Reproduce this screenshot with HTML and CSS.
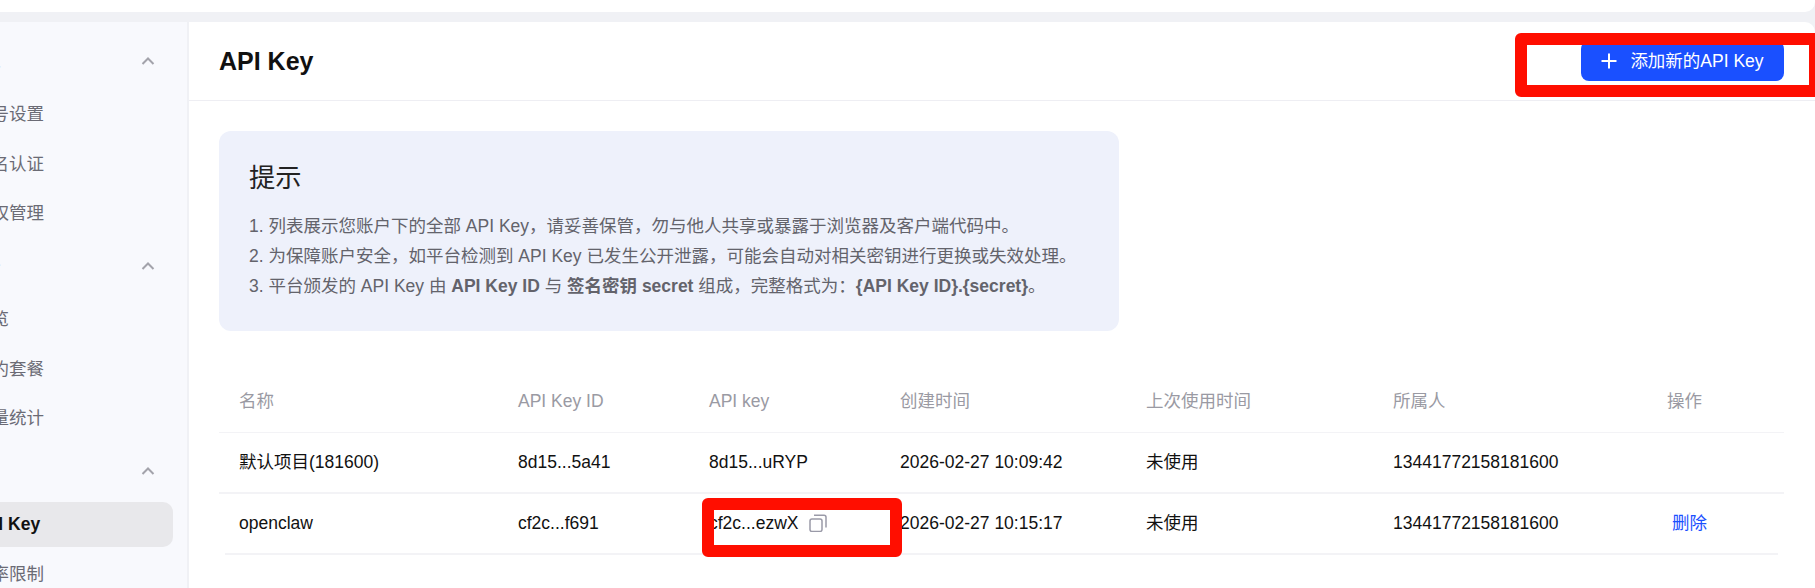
FILE: index.html
```html
<!DOCTYPE html>
<html lang="zh-CN">
<head>
    <meta charset="UTF-8">
    <title>API Key</title>
    <link rel="stylesheet" href="styles.css">
</head>
<body>
    <div class="topbar"></div>
    <div class="layout">
        <aside class="sidebar">
            <div class="menu">
                <div class="group"><span class="group-name">个人</span>
                    <svg class="chevron" viewBox="0 0 14 8"><path d="M1.5 7L7 1.5L12.5 7"/></svg>
                </div>
                <a class="item">账号设置</a>
                <a class="item">实名认证</a>
                <a class="item">授权管理</a>
                <div class="group"><span class="group-name">财务</span>
                    <svg class="chevron" viewBox="0 0 14 8"><path d="M1.5 7L7 1.5L12.5 7"/></svg>
                </div>
                <a class="item">总览</a>
                <a class="item">合约套餐</a>
                <a class="item">用量统计</a>
                <div class="group"><span class="group-name">项目</span>
                    <svg class="chevron" viewBox="0 0 14 8"><path d="M1.5 7L7 1.5L12.5 7"/></svg>
                </div>
                <a class="item active">API Key</a>
                <a class="item">速率限制</a>
            </div>
        </aside>
        <main class="content">
            <header class="page-head">
                <h1>API Key</h1>
                <button class="add-btn" type="button">
                    <svg class="plus" viewBox="0 0 16 16"><path d="M8 0.5V15.5M0.5 8H15.5"/></svg>
                    添加新的API Key
                </button>
            </header>
            <section class="tips">
                <h2>提示</h2>
                <p>1. 列表展示您账户下的全部 API Key，请妥善保管，勿与他人共享或暴露于浏览器及客户端代码中。</p>
                <p>2. 为保障账户安全，如平台检测到 API Key 已发生公开泄露，可能会自动对相关密钥进行更换或失效处理。</p>
                <p>3. 平台颁发的 API Key 由 <b>API Key ID</b> 与 <b>签名密钥 secret</b> 组成，完整格式为：<b>{API Key ID}.{secret}</b>。</p>
            </section>
            <section class="keys">
                <div class="row head">
                    <span>名称</span>
                    <span>API Key ID</span>
                    <span>API key</span>
                    <span>创建时间</span>
                    <span>上次使用时间</span>
                    <span>所属人</span>
                    <span>操作</span>
                </div>
                <div class="row">
                    <span>默认项目(181600)</span>
                    <span>8d15...5a41</span>
                    <span>8d15...uRYP</span>
                    <span>2026-02-27 10:09:42</span>
                    <span>未使用</span>
                    <span>13441772158181600</span>
                    <span></span>
                </div>
                <div class="row last">
                    <span>openclaw</span>
                    <span>cf2c...f691</span>
                    <span class="key-cell">cf2c...ezwX
                        <svg class="copy" viewBox="0 0 18 18"><rect x="1" y="5" width="12" height="12.5" rx="2"/><path d="M5 1.2H15a2 2 0 0 1 2 2V13.5"/></svg>
                    </span>
                    <span>2026-02-27 10:15:17</span>
                    <span>未使用</span>
                    <span>13441772158181600</span>
                    <span><a class="del">删除</a></span>
                </div>
            </section>
        </main>
    </div>
    <div class="mark mark-btn"></div>
    <div class="mark mark-key"></div>
</body>
</html>
```

FILE: styles.css
```css
* {
    box-sizing: border-box;
}
html, body {
    height: 100%;
}
body {
    margin: 0;
    overflow: hidden;
    background: #f0f1f5;
    color: #111;
    font-family: "Liberation Sans", "Noto Sans CJK SC", sans-serif;
    font-size: 17.5px;
    line-height: 24px;
}
.topbar {
    height: 12px;
    background: #fff;
    border-radius: 0 0 10px 0;
}
.layout {
    display: flex;
    height: 566px;
    margin-top: 10px;
    background: #fff;
    border-radius: 0 10px 0 0;
    overflow: hidden;
}
.sidebar {
    width: 189px;
    flex-shrink: 0;
    background: #f8f9fd;
    border-right: 2px solid #f0f1f5;
    overflow: hidden;
}
.menu {
    margin-left: -26px;
    padding-top: 8.5px;
}
.group {
    display: flex;
    justify-content: space-between;
    align-items: center;
    height: 45px;
    margin: 8px 0;
    padding-right: 32px;
    color: #98a2b8;
}
.group-name {
    margin-left: -8px;
}
.item {
    display: flex;
    align-items: center;
    height: 45px;
    width: 199px;
    margin-bottom: 4.5px;
    color: #6b6b75;
    border-radius: 10px;
}
.item.active {
    background: #e8e8eb;
    color: #111;
    font-weight: bold;
}
.chevron {
    width: 14px;
    height: 8px;
    fill: none;
    stroke: #a3a3ab;
    stroke-width: 2;
}
.content {
    flex: 1;
    min-width: 0;
}
.page-head {
    display: flex;
    justify-content: space-between;
    align-items: center;
    height: 79px;
    padding: 0 31px 0 30px;
    border-bottom: 1px solid #eeeef3;
}
h1 {
    margin: 0;
    font-size: 25px;
    font-weight: bold;
}
.add-btn {
    display: flex;
    align-items: center;
    justify-content: center;
    gap: 13px;
    width: 203px;
    height: 40px;
    padding: 0;
    border: none;
    border-radius: 8px;
    background: #1a50ff;
    color: #fff;
    font: inherit;
}
.plus {
    width: 16px;
    height: 16px;
    fill: none;
    stroke: #fff;
    stroke-width: 2;
}
.tips {
    width: 900px;
    height: 200px;
    margin: 30px 0 0 30px;
    padding: 29px 30px 0;
    background: #eef1fb;
    border-radius: 12px;
    color: #63636b;
    line-height: 30px;
}
.tips h2 {
    margin: 0 0 15px;
    color: #222;
    font-size: 26.25px;
    font-weight: normal;
    line-height: 36px;
}
.tips p {
    margin: 0;
}
.keys {
    margin: 41px 31px 0 30px;
}
.row {
    display: grid;
    grid-template-columns: 279px 191px 191px 246px 247px 274px 1fr;
    align-items: center;
    height: 61px;
    padding: 0 0 2px 20px;
    border-bottom: 2px solid #f3f3f6;
}
.row.head {
    color: #9a9aa3;
    border-bottom-width: 1px;
}
.row.last {
    margin: 0 6px;
    padding-left: 14px;
}
.key-cell {
    display: flex;
    align-items: center;
    gap: 11px;
}
.copy {
    width: 18px;
    height: 18px;
    fill: none;
    stroke: #9a9aa8;
    stroke-width: 1.5;
}
.del {
    margin-left: 5px;
    color: #1a50ff;
}
.mark {
    position: absolute;
    border: 12px solid #ff0e00;
    border-radius: 6px;
}
.mark-btn {
    left: 1515px;
    top: 33px;
    width: 306px;
    height: 64px;
}
.mark-key {
    left: 702px;
    top: 498px;
    width: 200px;
    height: 59px;
}
```
